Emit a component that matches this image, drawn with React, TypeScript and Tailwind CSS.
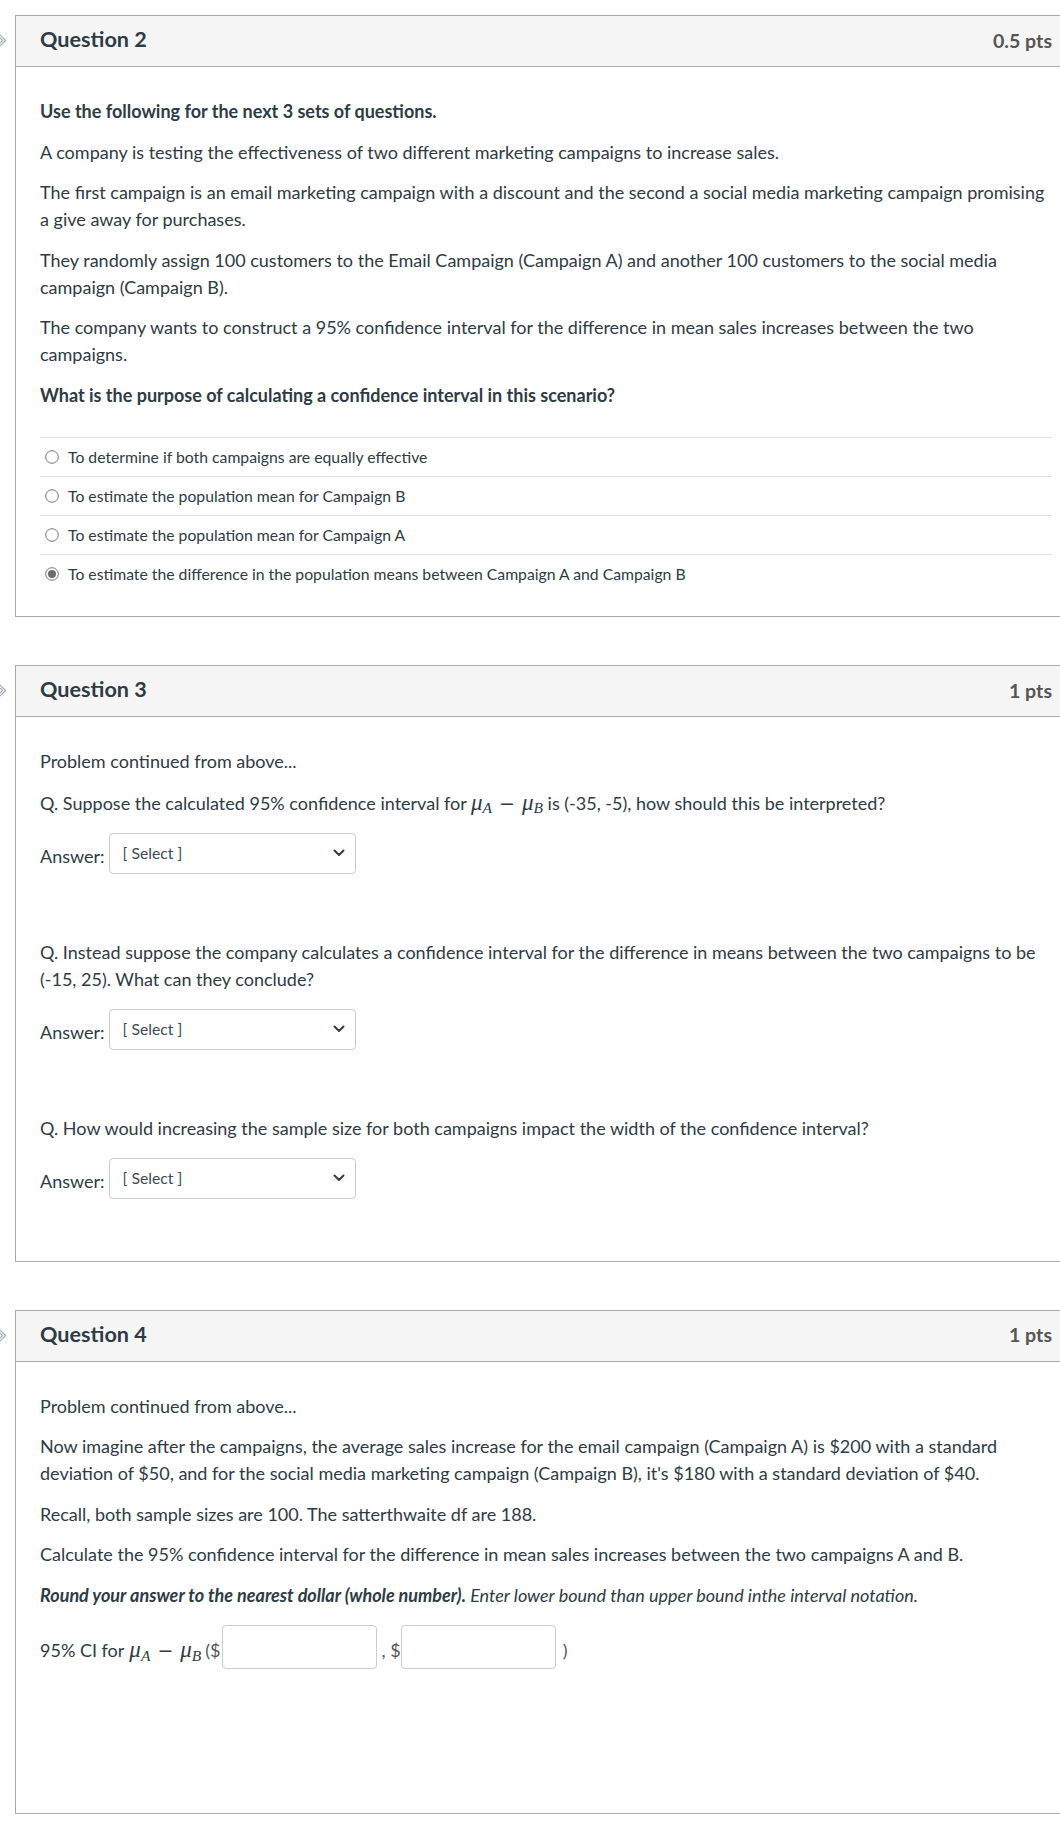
import React from "react";

const Marker = () => (
  <div className="w-[15px] shrink-0 pt-[18px]">
    <svg width="15" height="15" viewBox="0 0 15 15">
      <path d="M-4 1 L-1 1 L5.5 7.5 L-1 14 L-4 14 L2.5 7.5 Z" fill="#fff" stroke="#9fabb4" strokeWidth="1.2" strokeLinejoin="round" />
    </svg>
  </div>
);

const Header = ({ name, pts }: { name: string; pts: string }) => (
  <div className="h-[51px] bg-[#f5f5f5] border-b border-[#aaaaaa] flex items-center justify-between px-[24px]">
    <span className="text-[21.6px] font-bold text-[#2d3b45] -mt-[3px]">{name}</span>
    <span className="text-[19.6px] font-bold text-[#555555] -mt-[2px]">{pts}</span>
  </div>
);

const Mu = ({ s }: { s: string }) => (
  <span className="font-['Liberation_Serif',serif] italic text-[23px]">
    μ<sub className="text-[15.5px] italic">{s}</sub>
  </span>
);

const MuDiff = () => (
  <span className="whitespace-nowrap">
    <Mu s="A" />
    <span className="font-['DejaVu_Serif',serif] text-[19px] mx-[7px]">−</span>
    <Mu s="B" />
  </span>
);

const Radio = ({ checked }: { checked?: boolean }) => (
  <svg width="14" height="14" viewBox="0 0 14 14" className="shrink-0">
    <circle cx="7" cy="7" r="6.3" fill="#fff" stroke="#767676" strokeWidth="1" />
    {checked && <circle cx="7" cy="7" r="4" fill="#6b6b6b" />}
  </svg>
);

const AnswerRow = ({ text, checked }: { text: string; checked?: boolean }) => (
  <div className="h-[39px] border-t border-[#dddddd] flex items-center pl-[5px] gap-[9px]">
    <Radio checked={checked} />
    <span className="text-[15.75px] text-[#2d3b45] -mt-[1px]">{text}</span>
  </div>
);

const SelectLine = ({ className }: { className?: string }) => (
  <div className={"flex items-center " + (className || "")}>
    <span className="mt-[7px] mr-[4px]">Answer:</span>
    <div className="w-[247px] h-[41px] border border-[#c7cdd1] rounded-[4px] bg-white flex items-center justify-between pl-[13px] pr-[10px]">
      <span className="text-[15.75px] text-[#3d4b55] -mt-[2px]">[ Select ]</span>
      <svg width="12" height="8" viewBox="0 0 12 8">
        <path d="M1.5 1.5 L6 6 L10.5 1.5" fill="none" stroke="#2d3b45" strokeWidth="2" strokeLinecap="round" strokeLinejoin="round" />
      </svg>
    </div>
  </div>
);

const Card = ({ children }: { children: React.ReactNode }) => (
  <div className="flex">
    <Marker />
    <div className="w-[1062px] shrink-0 border border-[#aaaaaa] bg-white">{children}</div>
  </div>
);

export default function App() {
  return (
    <div className="w-[1060px] h-[1823px] overflow-hidden bg-white pt-[15px] font-['Lato','Noto_Sans',sans-serif] text-[#2d3b45] text-[18px] leading-[27px]">
      <Card>
        <Header name="Question 2" pts="0.5 pts" />
        <div className="px-[24px] pt-[31px] pb-[23px]">
          <div className="flex flex-col gap-[13.5px]">
            <p className="font-bold">Use the following for the next 3 sets of questions.</p>
            <p>A company is testing the effectiveness of two different marketing campaigns to increase sales.</p>
            <p>
              The first campaign is an email marketing campaign with a discount and the second a social media marketing
              campaign promising a give away for purchases.
            </p>
            <p>
              They randomly assign 100 customers to the Email Campaign (Campaign A) and another 100 customers to the social
              media campaign (Campaign B).
            </p>
            <p>
              The company wants to construct a 95% confidence interval for the difference in mean sales increases between the
              two campaigns.
            </p>
            <p className="font-bold">What is the purpose of calculating a confidence interval in this scenario?</p>
          </div>
          <div className="mt-[28.5px]">
            <AnswerRow text="To determine if both campaigns are equally effective" />
            <AnswerRow text="To estimate the population mean for Campaign B" />
            <AnswerRow text="To estimate the population mean for Campaign A" />
            <AnswerRow text="To estimate the difference in the population means between Campaign A and Campaign B" checked />
          </div>
        </div>
      </Card>

      <div className="h-[48px]" />

      <Card>
        <Header name="Question 3" pts="1 pts" />
        <div className="px-[24px] pt-[31px] pb-[62px]">
          <p>Problem continued from above...</p>
          <p className="mt-[13.5px]">
            Q. Suppose the calculated 95% confidence interval for <MuDiff /> is (-35, -5), how should this be interpreted?
          </p>
          <SelectLine className="mt-[16px]" />
          <p className="mt-[65px]">
            Q. Instead suppose the company calculates a confidence interval for the difference in means between the two
            campaigns to be (-15, 25). What can they conclude?
          </p>
          <SelectLine className="mt-[16px]" />
          <p className="mt-[65px]">
            Q. How would increasing the sample size for both campaigns impact the width of the confidence interval?
          </p>
          <SelectLine className="mt-[16px]" />
        </div>
      </Card>

      <div className="h-[48px]" />

      <Card>
        <Header name="Question 4" pts="1 pts" />
        <div className="px-[24px] pt-[31px] h-[451px]">
          <div className="flex flex-col gap-[13.5px]">
            <p>Problem continued from above...</p>
            <p>
              Now imagine after the campaigns, the average sales increase for the email campaign (Campaign A) is $200 with a
              standard deviation of $50, and for the social media marketing campaign (Campaign B), it's $180 with a standard
              deviation of $40.
            </p>
            <p>Recall, both sample sizes are 100. The satterthwaite df are 188.</p>
            <p>Calculate the 95% confidence interval for the difference in mean sales increases between the two campaigns A and B.</p>
            <p className="italic">
              <span className="font-bold">Round your answer to the nearest dollar (whole number).</span> Enter lower bound than
              upper bound inthe interval notation.
            </p>
          </div>
          <div className="mt-[16.5px] flex items-center">
            <span className="mt-[6px]">95% CI for </span>
            <span className="ml-[5px] mt-[6px]">
              <MuDiff />
            </span>
            <span className="ml-[4px] mt-[6px] text-[#555]">($</span>
            <div className="ml-[1px] w-[155px] h-[44px] border border-[#c7cdd1] rounded-[4px] bg-white" />
            <span className="ml-[5px] mt-[6px] text-[#555]">, $</span>
            <div className="ml-0 w-[155px] h-[44px] border border-[#c7cdd1] rounded-[4px] bg-white" />
            <span className="ml-[7px] mt-[6px] text-[#555]">)</span>
          </div>
        </div>
      </Card>
    </div>
  );
}
